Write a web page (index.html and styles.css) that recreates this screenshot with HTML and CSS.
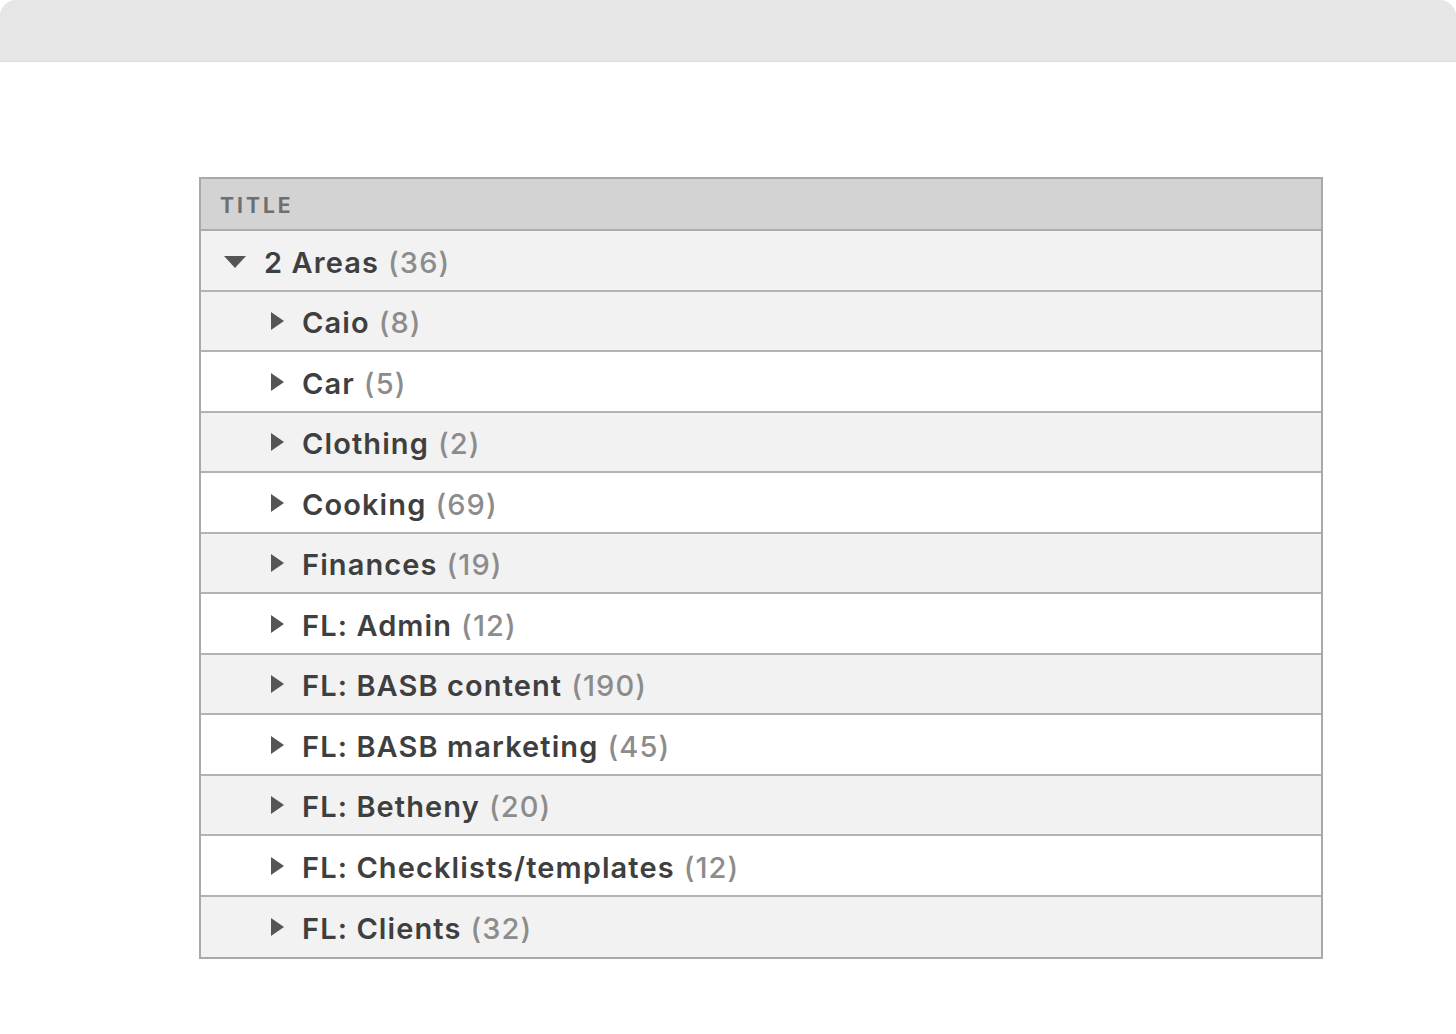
FILE: index.html
```html
<!DOCTYPE html>
<html>
<head>
<meta charset="utf-8">
<link rel="stylesheet" href="styles.css">
</head>
<body>
<div class="topbar"></div>
<main class="content">
  <div class="outline">
    <div class="head">TITLE</div>
    <div class="row shaded open">
      <svg class="tri down" viewBox="0 0 22 12"><polygon points="0,0 22,0 11,12"/></svg>
      <span class="name">2 Areas</span><span class="count">(36)</span>
    </div>
    <div class="row shaded child">
      <svg class="tri" viewBox="0 0 13 18"><polygon points="0,0 13,9 0,18"/></svg>
      <span class="name">Caio</span><span class="count">(8)</span>
    </div>
    <div class="row child">
      <svg class="tri" viewBox="0 0 13 18"><polygon points="0,0 13,9 0,18"/></svg>
      <span class="name">Car</span><span class="count">(5)</span>
    </div>
    <div class="row shaded child">
      <svg class="tri" viewBox="0 0 13 18"><polygon points="0,0 13,9 0,18"/></svg>
      <span class="name">Clothing</span><span class="count">(2)</span>
    </div>
    <div class="row child">
      <svg class="tri" viewBox="0 0 13 18"><polygon points="0,0 13,9 0,18"/></svg>
      <span class="name">Cooking</span><span class="count">(69)</span>
    </div>
    <div class="row shaded child">
      <svg class="tri" viewBox="0 0 13 18"><polygon points="0,0 13,9 0,18"/></svg>
      <span class="name">Finances</span><span class="count">(19)</span>
    </div>
    <div class="row child">
      <svg class="tri" viewBox="0 0 13 18"><polygon points="0,0 13,9 0,18"/></svg>
      <span class="name">FL: Admin</span><span class="count">(12)</span>
    </div>
    <div class="row shaded child">
      <svg class="tri" viewBox="0 0 13 18"><polygon points="0,0 13,9 0,18"/></svg>
      <span class="name">FL: BASB content</span><span class="count">(190)</span>
    </div>
    <div class="row child">
      <svg class="tri" viewBox="0 0 13 18"><polygon points="0,0 13,9 0,18"/></svg>
      <span class="name">FL: BASB marketing</span><span class="count">(45)</span>
    </div>
    <div class="row shaded child">
      <svg class="tri" viewBox="0 0 13 18"><polygon points="0,0 13,9 0,18"/></svg>
      <span class="name">FL: Betheny</span><span class="count">(20)</span>
    </div>
    <div class="row child">
      <svg class="tri" viewBox="0 0 13 18"><polygon points="0,0 13,9 0,18"/></svg>
      <span class="name">FL: Checklists/templates</span><span class="count">(12)</span>
    </div>
    <div class="row shaded child last">
      <svg class="tri" viewBox="0 0 13 18"><polygon points="0,0 13,9 0,18"/></svg>
      <span class="name">FL: Clients</span><span class="count">(32)</span>
    </div>
  </div>
</main>
</body>
</html>
```

FILE: styles.css
```css
html, body {
  margin: 0;
  padding: 0;
  background: #ffffff;
}
body {
  font-family: Inter, "Liberation Sans", Arial, sans-serif;
  width: 1456px;
  height: 1034px;
  overflow: hidden;
}
.topbar {
  height: 61px;
  background: #e6e6e6;
  border-radius: 16px 16px 0 0;
  border-bottom: 1px solid #dedede;
}
.content {
  padding: 115px 0 0 199px;
}
.outline {
  width: 1120px;
  border: 2px solid #a9a9a9;
  background: #fff;
}
.head {
  height: 52px;
  box-sizing: border-box;
  border-bottom: 2px solid #ababab;
  background: #d3d3d3;
  display: flex;
  align-items: center;
  padding-left: 19px;
  padding-top: 3px;
  font-weight: 700;
  font-size: 21px;
  letter-spacing: 3px;
  color: #6f6f6f;
}
.row {
  height: 60.5px;
  box-sizing: border-box;
  border-bottom: 2px solid #b3b3b3;
  display: flex;
  align-items: center;
  padding-top: 4px;
  font-size: 29px;
  letter-spacing: 1.1px;
  font-weight: 600;
  background: #ffffff;
}
.row.last {
  border-bottom: none;
  height: 60px;
}
.row.shaded {
  background: #f2f2f2;
}
.tri {
  fill: #555555;
  flex: none;
}
.tri.down {
  width: 22px;
  height: 12px;
  margin: 0 18px 0 23px;
}
.child .tri {
  width: 13px;
  height: 18px;
  margin: -3px 18px 0 70px;
}
.name {
  color: #3f3f3f;
}
.count {
  color: #8c8c8c;
  font-weight: 500;
  margin-left: 9px;
}
```
